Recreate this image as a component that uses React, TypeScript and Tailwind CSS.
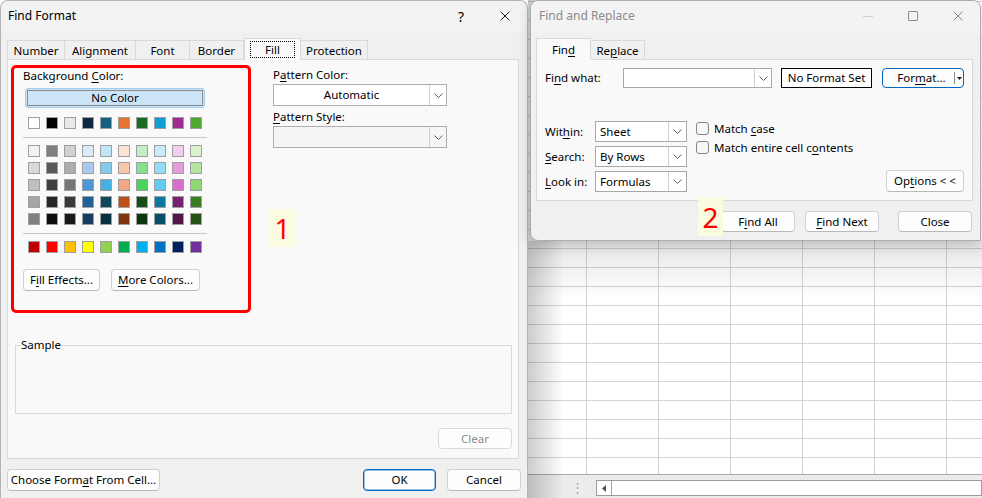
import React from 'react';

const FONT = "font-['Noto_Sans','Open_Sans',sans-serif]";

const themeRow = ['#ffffff', '#000000', '#e8e8e8', '#0e2841', '#156082', '#e97132', '#196b24', '#0f9ed5', '#a02b93', '#4ea72e'];
const tintRows = [
  ['#f2f2f2', '#7f7f7f', '#d1d1d1', '#dae9f8', '#c0e6f5', '#fbe2d5', '#c1f0c8', '#caedfb', '#f2ceef', '#daf2d0'],
  ['#d9d9d9', '#595959', '#adadad', '#a6c9ec', '#83cceb', '#f7c7ac', '#83e28e', '#94dcf8', '#e49edd', '#b4e5a2'],
  ['#bfbfbf', '#404040', '#757575', '#4e95d9', '#45b0e1', '#f1a983', '#47d45a', '#61cbf3', '#d86dcd', '#8ed973'],
  ['#a6a6a6', '#262626', '#3a3a3a', '#215f9a', '#0f4761', '#c04f15', '#124f1a', '#0b76a0', '#782170', '#3b7d23'],
  ['#808080', '#0d0d0d', '#171717', '#153d64', '#0a2f40', '#80350e', '#0d3512', '#074f69', '#511548', '#275317'],
];
const standardRow = ['#c00000', '#ff0000', '#ffc000', '#ffff00', '#92d050', '#00b050', '#00b0f0', '#0070c0', '#002060', '#7030a0'];

const sheetCols = [59, 72, 72, 72, 72, 72, 72];

const Key = ({ children }: { children: React.ReactNode }) => (
  <span className="underline underline-offset-[2px]">{children}</span>
);

const Chevron = ({ color = '#606060' }: { color?: string }) => (
  <svg width="9" height="5" viewBox="0 0 9 5" fill="none">
    <path d="M0.5 0.5 L4.5 4.5 L8.5 0.5" stroke={color} strokeWidth="1" />
  </svg>
);

const CloseIcon = ({ color = '#1a1a1a', size = 10 }: { color?: string; size?: number }) => (
  <svg width={size} height={size} viewBox="0 0 10 10">
    <path d="M0.5 0.5 L9.5 9.5 M9.5 0.5 L0.5 9.5" stroke={color} strokeWidth="1" />
  </svg>
);

const Button = ({
  children,
  className = '',
  disabled = false,
  primary = false,
}: {
  children: React.ReactNode;
  className?: string;
  disabled?: boolean;
  primary?: boolean;
}) => (
  <div
    className={`flex items-center justify-center rounded-[4px] border bg-[#fdfdfd] leading-none ${
      primary ? 'border-[#0067c0] ring-1 ring-inset ring-[#0067c0]/40' : disabled ? 'border-[#dadada]' : 'border-[#d0d0d0] border-b-[#b8b8b8]'
    } ${disabled ? 'text-[#8d8d8d]' : 'text-black'} ${className}`}
  >
    {children}
  </div>
);

const Swatch = ({ c }: { c: string }) => (
  <span className="block w-[12px] h-[12px] border border-[#a0a0a0]" style={{ backgroundColor: c }} />
);

const SwatchRow = ({ colors }: { colors: string[] }) => (
  <div className="flex gap-[6px] ml-[5px]">
    {colors.map((c, i) => (
      <Swatch key={i} c={c} />
    ))}
  </div>
);

const Tab = ({ label, width, active = false, focus = false }: { label: React.ReactNode; width: number; active?: boolean; focus?: boolean }) => (
  <div
    className={`flex items-center justify-center border border-[#d9d9d9] ${
      active ? 'h-[22px] bg-[#f9f9f9] border-b-[#f9f9f9] relative z-10 -mb-px' : 'h-[19px] bg-[#f0f0f0] border-b-0 -ml-px first:ml-0'
    }`}
    style={{ width }}
  >
    <span className={focus ? 'border border-dotted border-black px-[14px] py-px leading-[13px]' : 'leading-[13px]'}>{label}</span>
  </div>
);

const Annotation = ({ n, className }: { n: string; className: string }) => (
  <div className={`absolute flex items-center justify-center bg-[#fbfbdf] text-[#ff0000] text-[28px] leading-none ${className}`}>
    {n}
  </div>
);

function FindFormat() {
  return (
    <div className="relative w-[528px] shrink-0 h-full bg-[#f0f0f0] border border-b-0 border-[#b4b4b4] rounded-t-[8px] flex flex-col">
      {/* title bar */}
      <div className="h-[30px] flex items-center pl-[7px] pr-[17px] bg-[#f3f3f3] rounded-t-[8px]">
        <span className="text-[12px]">Find Format</span>
        <span className="ml-auto text-[14px] mr-[36px]">?</span>
        <CloseIcon />
      </div>

      {/* tabs */}
      <div className="mt-[7px] pl-[6px] flex items-end h-[21px]">
        <Tab label="Number" width={58} />
        <Tab label="Alignment" width={72} />
        <Tab label="Font" width={55} />
        <Tab label="Border" width={55} />
        <Tab label="Fill" width={57} active focus />
        <Tab label="Protection" width={68} />
      </div>

      {/* panel */}
      <div className="ml-[6px] w-[512px] h-[400px] bg-[#f9f9f9] border border-[#d9d9d9] pl-[3px] pt-[5px] flex flex-col">
        <div className="flex">
          {/* background color (highlighted) */}
          <div className="w-[240px] h-[248px] border-[3px] border-[#ff0000] rounded-[5px] pl-[9px] flex flex-col">
            <span className="leading-[14px] mt-px">
              Background <Key>C</Key>olor:
            </span>
            <div className="mt-[5px] ml-[2px] w-[180px] h-[20px] rounded-[3px] border border-[#9fcdf2] bg-[#cce4f7] p-[1px]">
              <div className="h-full border border-[#8a8a8a] flex items-center justify-center leading-none">No Color</div>
            </div>
            <div className="mt-[9px]">
              <SwatchRow colors={themeRow} />
            </div>
            <div className="mt-[8px] w-[184px] h-px bg-[#c8c8c8]" />
            <div className="mt-[7px] flex flex-col gap-[5px]">
              {tintRows.map((r, i) => (
                <SwatchRow key={i} colors={r} />
              ))}
            </div>
            <div className="mt-[8px] w-[184px] h-px bg-[#c8c8c8]" />
            <div className="mt-[7px]">
              <SwatchRow colors={standardRow} />
            </div>
            <div className="mt-[16px] flex gap-[11px]">
              <Button className="w-[77px] h-[22px]">
                <span>
                  F<Key>i</Key>ll Effects...
                </span>
              </Button>
              <Button className="w-[89px] h-[22px]">
                <span>
                  <Key>M</Key>ore Colors...
                </span>
              </Button>
            </div>
          </div>

          {/* pattern */}
          <div className="ml-[22px] pt-[3px] flex flex-col">
            <span className="leading-[14px]">
              P<Key>a</Key>ttern Color:
            </span>
            <div className="mt-[2px] w-[174px] h-[22px] bg-white border border-[#adadad] flex">
              <span className="flex-1 flex items-center justify-center leading-none">Automatic</span>
              <span className="w-[17px] border-l border-[#cfcfcf] flex items-center justify-center">
                <Chevron />
              </span>
            </div>
            <span className="mt-[4px] leading-[14px]">
              <Key>P</Key>attern Style:
            </span>
            <div className="mt-[2px] w-[174px] h-[22px] bg-[#f5f5f5] border border-[#adadad] flex">
              <span className="flex-1" />
              <span className="w-[17px] border-l border-[#cfcfcf] flex items-center justify-center">
                <Chevron />
              </span>
            </div>
          </div>
        </div>

        {/* sample */}
        <fieldset className="mt-[25px] ml-[4px] w-[497px] h-[76px] border border-[#dadada] px-0">
          <legend className="ml-[5px] leading-[14px]">Sample</legend>
        </fieldset>

        <Button disabled className="mt-[14px] self-end mr-[6px] w-[74px] h-[21px]">
          Clear
        </Button>
      </div>

      {/* footer buttons */}
      <div className="mt-[10px] pl-[6px] pr-[6px] flex">
        <Button className="w-[153px] h-[22px]">
          <span>
            Choose Form<Key>a</Key>t From Cell...
          </span>
        </Button>
        <Button primary className="ml-auto w-[73px] h-[22px]">
          OK
        </Button>
        <Button className="ml-[11px] w-[74px] h-[22px]">Cancel</Button>
      </div>

      <Annotation n="1" className="left-[269px] top-[208px] w-[25px] h-[38px]" />
    </div>
  );
}

const Combo = ({ value }: { value: string }) => (
  <div className="w-[92px] h-[21px] bg-white border border-[#a8a8a8] flex">
    <span className="flex-1 flex items-center pl-[4px] leading-none">{value}</span>
    <span className="w-[18px] border-l border-[#cfcfcf] flex items-center justify-center">
      <Chevron />
    </span>
  </div>
);

const Check = ({ children }: { children: React.ReactNode }) => (
  <div className="flex items-center h-[13px]">
    <span className="w-[13px] h-[13px] rounded-[3px] border border-[#858585] bg-[#f7f7f7]" />
    <span className="ml-[5px] leading-none">{children}</span>
  </div>
);

function FindReplace() {
  const rows: [React.ReactNode, string][] = [
    [<>Wit<Key>h</Key>in:</>, 'Sheet'],
    [<><Key>S</Key>earch:</>, 'By Rows'],
    [<><Key>L</Key>ook in:</>, 'Formulas'],
  ];
  return (
    <div className="absolute left-[2px] top-0 w-[451px] h-[241px] bg-[#f0f0f0] border border-[#adadad] rounded-l-[8px] rounded-tr-[8px] shadow-[0_4px_14px_rgba(0,0,0,0.18)] flex flex-col">
      {/* title bar */}
      <div className="h-[30px] flex items-center pl-[8px] bg-[#f3f3f3] rounded-t-[8px]">
        <span className="text-[12px] text-[#8a8a8a]">Find and Replace</span>
        <div className="ml-auto flex">
          <span className="w-[45px] flex items-center justify-center">
            <span className="w-[10px] h-px bg-[#cdcdcd]" />
          </span>
          <span className="w-[45px] flex items-center justify-center">
            <span className="w-[10px] h-[10px] border border-[#8a8a8a] rounded-[1px]" />
          </span>
          <span className="w-[45px] flex items-center justify-center">
            <CloseIcon color="#858585" />
          </span>
        </div>
      </div>

      {/* tabs */}
      <div className="mt-[7px] pl-[5px] flex items-end h-[21px]">
        <Tab label={<>Fin<Key>d</Key></>} width={55} active />
        <Tab label={<>Re<Key>p</Key>lace</>} width={55} />
      </div>

      {/* panel */}
      <div className="ml-[5px] w-[437px] h-[142px] bg-[#f9f9f9] border border-[#d9d9d9] pl-[8px] pr-[8px] pt-[8px] pb-[8px] flex flex-col">
        <div className="flex items-center h-[20px]">
          <span className="w-[78px] leading-none">
            Fi<Key>n</Key>d what:
          </span>
          <div className="w-[149px] h-[20px] bg-white border border-[#a8a8a8] flex">
            <span className="flex-1" />
            <span className="w-[17px] border-l border-[#cfcfcf] flex items-center justify-center">
              <Chevron />
            </span>
          </div>
          <div className="ml-[9px] w-[91px] h-[20px] bg-white border border-black flex items-center justify-center leading-none">
            No Format Set
          </div>
          <div className="ml-[10px] w-[82px] h-[20px] rounded-[4px] border-[1.5px] border-[#0067c0] bg-[#fdfdfd] flex items-center">
            <span className="flex-1 text-center leading-none pl-[6px]">
              For<Key>m</Key>at...
            </span>
            <span className="w-px h-[12px] bg-[#8a8a8a]" />
            <span className="w-[8px] flex justify-center">
              <svg width="5" height="3" viewBox="0 0 5 3">
                <path d="M0 0 H5 L2.5 3 Z" fill="#202020" />
              </svg>
            </span>
          </div>
        </div>

        <div className="mt-[33px] flex flex-1">
          <div className="flex flex-col gap-[4px]">
            {rows.map(([label, value], i) => (
              <div key={i} className="flex items-center">
                <span className="w-[50px] leading-none">{label}</span>
                <Combo value={value} />
              </div>
            ))}
          </div>
          <div className="ml-[9px] flex-1 flex flex-col">
            <div className="mt-px flex flex-col gap-[6px]">
              <Check>
                Match <Key>c</Key>ase
              </Check>
              <Check>
                Match entire cell c<Key>o</Key>ntents
              </Check>
            </div>
            <Button className="mt-auto self-end w-[78px] h-[22px]">
              <span>
                Op<Key>t</Key>ions &lt; &lt;
              </span>
            </Button>
          </div>
        </div>
      </div>

      {/* buttons */}
      <div className="mt-[10px] ml-[5px] w-[436px] flex justify-end">
        <Button className="w-[74px] h-[21px]">
          <span>
            F<Key>i</Key>nd All
          </span>
        </Button>
        <Button className="ml-[10px] w-[74px] h-[21px]">
          <span>
            <Key>F</Key>ind Next
          </span>
        </Button>
        <Button className="ml-[19px] w-[74px] h-[21px]">Close</Button>
      </div>

      <Annotation n="2" className="left-[167px] top-[196px] w-[25px] h-[39px]" />
    </div>
  );
}

function Sheet() {
  return (
    <div className="absolute inset-0 flex flex-col bg-white">
      <div className="h-[475px] overflow-hidden border-b border-[#a9a9a9]">
        <div className="-mt-[17px]">
          {Array.from({ length: 27 }).map((_, r) => (
            <div key={r} className="flex h-[19px]">
              {sheetCols.map((w, c) => (
                <div key={c} className="shrink-0 h-[19px] border-r border-b border-[#d4d4d4]" style={{ width: w }} />
              ))}
            </div>
          ))}
        </div>
      </div>
      <div className="flex-1 bg-[#ececec] flex items-start">
        <span className="ml-[43px] mt-[6px] text-[#a8a8a8] text-[13px] leading-none">⋮</span>
        <div className="ml-[12px] mt-[5px] flex-1 h-[16px] bg-white border border-[#9c9c9c] flex">
          <span className="w-[15px] border-r border-[#9c9c9c] flex items-center justify-center">
            <svg width="4" height="7" viewBox="0 0 4 7">
              <path d="M4 0 V7 L0 3.5 Z" fill="#505050" />
            </svg>
          </span>
        </div>
      </div>
      {/* dialog shadows on the sheet */}
      <div className="absolute left-0 top-0 bottom-0 w-[36px] bg-linear-to-r from-black/20 to-transparent" />
      <div className="absolute left-0 right-0 top-[241px] h-[60px] bg-linear-to-b from-black/10 to-transparent" />
    </div>
  );
}

export default function App() {
  return (
    <div className={`${FONT} w-[982px] h-[498px] overflow-hidden flex bg-white text-[11.5px] text-black`}>
      <FindFormat />
      <div className="relative flex-1 h-full">
        <Sheet />
        <FindReplace />
      </div>
    </div>
  );
}
